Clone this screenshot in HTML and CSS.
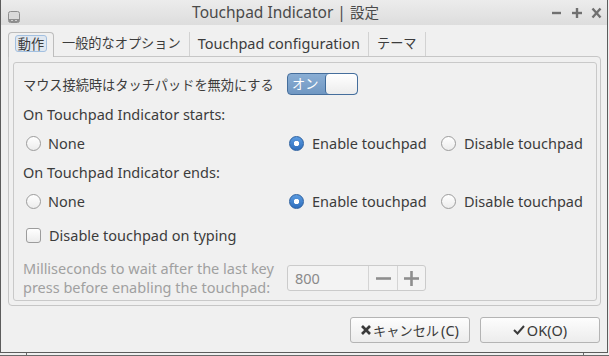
FILE: index.html
```html
<!DOCTYPE html>
<html lang="ja">
<head>
    <meta charset="UTF-8">
    <title>Touchpad Indicator | 設定</title>
    <link rel="stylesheet" href="styles.css">
</head>
<body>
<div class="window">
    <div class="titlebar">
        <div class="app-icon">
            <svg width="12" height="12" viewBox="0 0 12 12">
                <rect x="0.5" y="0.5" width="11" height="11" rx="2" fill="#dadada" stroke="#8e8e8e"/>
                <rect x="1" y="8" width="10" height="3" fill="#8e8e8e"/>
                <rect x="3" y="9" width="2" height="1" fill="#d0d0d0"/>
                <rect x="7" y="9" width="2" height="1" fill="#d0d0d0"/>
            </svg>
        </div>
        <div class="title">Touchpad Indicator | <span class="ja">設定</span></div>
        <div class="win-buttons">
            <svg width="60" height="25" viewBox="0 0 60 25">
                <g stroke="#707070" stroke-width="2.4" fill="none">
                    <line x1="6" y1="13" x2="15" y2="13"/>
                    <line x1="26" y1="13" x2="36" y2="13"/>
                    <line x1="31" y1="8" x2="31" y2="18"/>
                    <line x1="46.5" y1="8.5" x2="54.5" y2="17.5"/>
                    <line x1="54.5" y1="8.5" x2="46.5" y2="17.5"/>
                </g>
            </svg>
        </div>
    </div>

    <div class="content">
        <div class="tabs">
            <div class="tab active"><span class="focus ja">動作</span></div>
            <div class="tab ja">一般的なオプション</div>
            <div class="tab">Touchpad configuration</div>
            <div class="tab ja">テーマ</div>
            <div class="tab-fill"></div>
        </div>

        <div class="page">
            <div class="frame">
                <div class="row two-col">
                    <span class="ja">マウス接続時はタッチパッドを無効にする</span>
                    <div class="switch">
                        <span class="switch-on ja">オン</span>
                        <span class="switch-knob"></span>
                    </div>
                </div>

                <div class="row">On Touchpad Indicator starts:</div>
                <div class="row radios">
                    <label class="option"><span class="radio"></span>None</label>
                    <label class="option"><span class="radio on"></span>Enable touchpad</label>
                    <label class="option"><span class="radio"></span>Disable touchpad</label>
                </div>

                <div class="row">On Touchpad Indicator ends:</div>
                <div class="row radios">
                    <label class="option"><span class="radio"></span>None</label>
                    <label class="option"><span class="radio on"></span>Enable touchpad</label>
                    <label class="option"><span class="radio"></span>Disable touchpad</label>
                </div>

                <div class="row row-check">
                    <label class="option"><span class="checkbox"></span>Disable touchpad on typing</label>
                </div>

                <div class="row two-col row-spin">
                    <div class="disabled">Milliseconds to wait after the last key<br>press before enabling the touchpad:</div>
                    <div class="spin">
                        <span class="spin-value">800</span>
                        <span class="spin-btn">
                            <svg width="15" height="15" viewBox="0 0 15 15"><line x1="0" y1="7.5" x2="15" y2="7.5" stroke="#8e8e8e" stroke-width="2.6"/></svg>
                        </span>
                        <span class="spin-btn">
                            <svg width="15" height="15" viewBox="0 0 15 15"><g stroke="#8e8e8e" stroke-width="2.6"><line x1="0" y1="7.5" x2="15" y2="7.5"/><line x1="7.5" y1="0" x2="7.5" y2="15"/></g></svg>
                        </span>
                    </div>
                </div>
            </div>
        </div>

        <div class="actions">
            <button class="btn">
                <svg width="10" height="10" viewBox="0 0 10 10"><g stroke="#3a3a3a" stroke-width="2.6"><line x1="1" y1="1" x2="9" y2="9"/><line x1="9" y1="1" x2="1" y2="9"/></g></svg>
                <span class="ja">キャンセル</span>(C)
            </button>
            <button class="btn">
                <svg width="12" height="10" viewBox="0 0 12 10"><polyline points="1,5 4.5,8.5 11,1" fill="none" stroke="#3a3a3a" stroke-width="2"/></svg>
                OK(O)
            </button>
        </div>
    </div>
</div>
<div class="taskbar">
    <div class="task first"></div>
    <div class="task middle"></div>
    <div class="task"></div>
</div>
</body>
</html>
```

FILE: styles.css
```css
body {
    margin: 0;
    width: 609px;
    height: 356px;
    overflow: hidden;
    background: #efefef;
    font-family: "Noto Sans", "Noto Sans CJK JP", sans-serif;
    font-size: 14.5px;
    color: #3c3c3c;
}
.ja {
    font-size: 13.2px;
}
.window {
    width: 608px;
    height: 353px;
    box-sizing: border-box;
    border-left: 1px solid #5c5c5c;
    border-right: 1px solid #5c5c5c;
    border-bottom: 1px solid #5c5c5c;
    background: #f0f0f0;
    display: flex;
    flex-direction: column;
}
.titlebar {
    height: 25px;
    display: flex;
    align-items: center;
    background: linear-gradient(#ececec, #dddddd);
}
.app-icon {
    width: 24px;
    height: 25px;
    box-sizing: border-box;
    padding: 7px 0 0 7px;
}
.title {
    flex: 1;
    text-align: center;
    font-size: 15.5px;
    color: #4a4a4a;
    line-height: 25px;
}
.title .ja {
    font-size: 14.5px;
}
.win-buttons {
    width: 60px;
    height: 25px;
    margin-right: 1px;
}
.content {
    padding: 7px 6px 0 7px;
}
.tabs {
    display: flex;
    height: 24px;
    line-height: 23px;
}
.tab {
    padding: 0 8px;
    border-right: 1px solid #d2d2d2;
    height: 24px;
    box-sizing: border-box;
}
.tab.active {
    border: 1px solid #bdbdbd;
    border-bottom: none;
    border-radius: 4px 4px 0 0;
    background: #f0f0f0;
    padding: 2px 6px 0 6px;
    height: 25px;
    position: relative;
    z-index: 1;
}
.tab-fill {
    flex: 1;
}
.focus {
    display: block;
    width: 32px;
    height: 17px;
    line-height: 16px;
    box-sizing: border-box;
    text-align: center;
    border: 1px solid #a3c0e0;
    border-radius: 3px;
    background: #dfe7f0;
}
.page {
    height: 250px;
    box-sizing: border-box;
    border: 1px solid #c6c6c6;
    border-radius: 0 4px 4px 4px;
    padding: 5px 3px 4px 4px;
}
.frame {
    height: 239px;
    box-sizing: border-box;
    border: 1px solid #c9c9c9;
    border-radius: 3px;
    padding: 10px 0 0 9px;
    display: flex;
    flex-direction: column;
    gap: 9px;
}
.row {
    display: flex;
    align-items: center;
    height: 20px;
    white-space: nowrap;
}
.two-col {
    display: grid;
    grid-template-columns: 264px auto;
    align-items: center;
}
.row:first-child {
    height: 22px;
}
.radios {
    display: grid;
    grid-template-columns: 263px 152px auto;
    padding-left: 3px;
}
.option {
    display: flex;
    align-items: center;
    gap: 8px;
}
.radio {
    width: 15px;
    height: 15px;
    box-sizing: border-box;
    border-radius: 50%;
    border: 1px solid #9c9c9c;
    background: linear-gradient(#ffffff, #ececec);
}
.radios .option:first-child {
    gap: 7px;
}
.radio.on {
    border-color: #2c60a0;
    background: radial-gradient(circle, #ffffff 0 2.4px, transparent 3px), linear-gradient(#5b9be0, #2e6ebd);
}
.row-check {
    margin-top: 5px;
    padding-left: 3px;
}
.checkbox {
    width: 15px;
    height: 15px;
    box-sizing: border-box;
    border-radius: 3px;
    border: 1px solid #9c9c9c;
    background: linear-gradient(#ffffff, #ececec);
}
.row-spin {
    margin-top: 5px;
    height: 26px;
}
.disabled {
    color: #a0a0a0;
    line-height: 19px;
}
.switch {
    width: 71px;
    height: 22px;
    box-sizing: border-box;
    border: 1px solid #456e9c;
    border-radius: 4px;
    display: flex;
    background: linear-gradient(#8aaed4, #7097c2);
    overflow: hidden;
}
.switch-on {
    width: 37px;
    color: #ffffff;
    line-height: 20px;
    padding-left: 4px;
    box-sizing: border-box;
}
.switch-knob {
    flex: 1;
    border-left: 1px solid #3e6a99;
    border-radius: 4px;
    background: linear-gradient(#ffffff, #ececec);
}
.spin {
    width: 139px;
    height: 26px;
    box-sizing: border-box;
    border: 1px solid #cbcbcb;
    border-radius: 3px;
    background: #f3f3f3;
    display: flex;
}
.spin-value {
    width: 81px;
    padding-left: 7px;
    box-sizing: border-box;
    color: #8a8a8a;
    line-height: 24px;
}
.spin-btn {
    width: 29px;
    border-left: 1px solid #d4d4d4;
    display: flex;
    align-items: center;
    justify-content: center;
}
.spin-btn:last-child {
    width: 27px;
}
.actions {
    display: flex;
    justify-content: flex-end;
    gap: 10px;
    margin-top: 11px;
    padding-right: 1px;
}
.btn {
    width: 120px;
    height: 26px;
    border: 1px solid #b4b4b4;
    border-radius: 3px;
    background: linear-gradient(#fdfdfd, #ececec);
    font-family: inherit;
    font-size: 14.5px;
    color: #3a3a3a;
    display: flex;
    align-items: center;
    justify-content: center;
    gap: 2px;
    padding: 0;
}
.taskbar {
    display: flex;
    height: 3px;
    border-bottom: 1px solid #6a6a6a;
    box-sizing: border-box;
}
.task {
    flex: 1;
}
.task.first {
    flex: 0 0 26px;
    border-right: 1px solid #6a6a6a;
}
.task.middle {
    flex: 0 0 556px;
    border-right: 1px solid #6a6a6a;
}
```
